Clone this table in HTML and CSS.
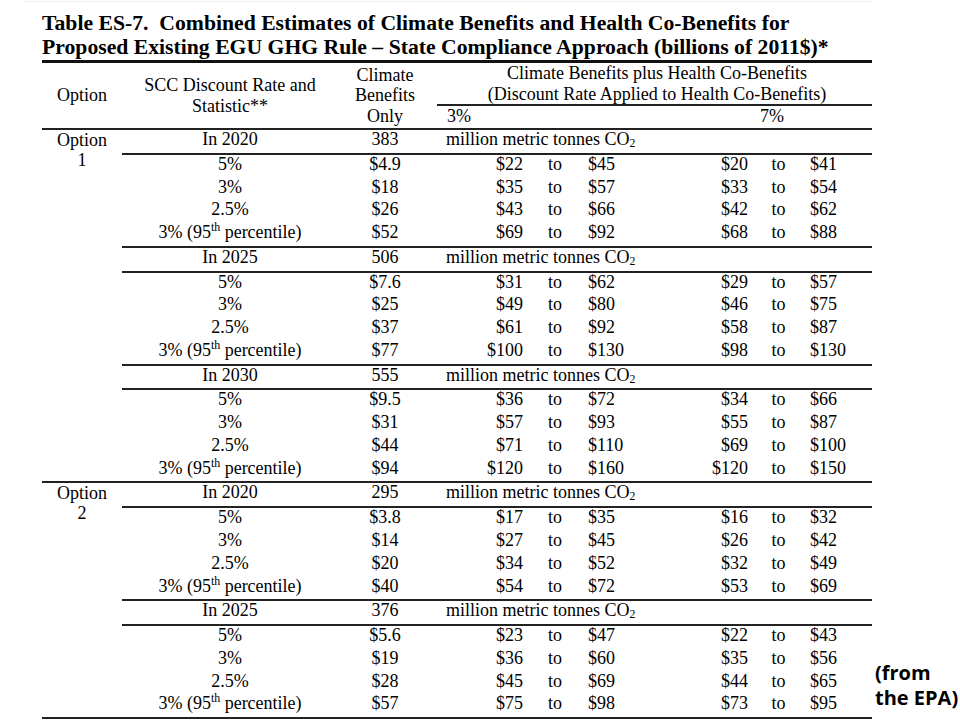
FILE: index.html
```html
<!DOCTYPE html>
<html lang="en">
<head>
<meta charset="utf-8">
<title>Table ES-7</title>
<link rel="stylesheet" href="styles.css">
</head>
<body>
<div class="page">
  <div class="doc">
    <h1 class="title">Table ES-7.&nbsp; Combined Estimates of Climate Benefits and Health Co-Benefits for<br>Proposed Existing EGU GHG Rule – State Compliance Approach (billions of 2011$)*</h1>
    <table class="est">
      <colgroup>
        <col class="c-opt"><col class="c-scc"><col class="c-clim">
        <col class="c-lo1"><col class="c-to1"><col class="c-hi1">
        <col class="c-lo2"><col class="c-to2"><col class="c-hi2">
      </colgroup>
      <thead>
        <tr class="h1">
          <th rowspan="2">Option</th>
          <th rowspan="2">SCC Discount Rate and<br>Statistic**</th>
          <th rowspan="2">Climate<br>Benefits<br>Only</th>
          <th colspan="6" class="group">Climate Benefits plus Health Co-Benefits<br>(Discount Rate Applied to Health Co-Benefits)</th>
        </tr>
        <tr class="h2">
          <th colspan="3" class="r3">3%</th>
          <th colspan="3" class="r7">7%</th>
        </tr>
      </thead>
      <tbody>
        <tr class="yr"><th rowspan="15" class="opt">Option<br>1</th><td>In 2020</td><td>383</td><td colspan="6" class="unit">million metric tonnes CO<sub>2</sub></td></tr>
        <tr><td>5%</td><td>$4.9</td><td class="lo">$22</td><td>to</td><td class="hi">$45</td><td class="lo">$20</td><td>to</td><td class="hi">$41</td></tr>
        <tr><td>3%</td><td>$18</td><td class="lo">$35</td><td>to</td><td class="hi">$57</td><td class="lo">$33</td><td>to</td><td class="hi">$54</td></tr>
        <tr><td>2.5%</td><td>$26</td><td class="lo">$43</td><td>to</td><td class="hi">$66</td><td class="lo">$42</td><td>to</td><td class="hi">$62</td></tr>
        <tr class="last"><td>3% (95<sup>th</sup> percentile)</td><td>$52</td><td class="lo">$69</td><td>to</td><td class="hi">$92</td><td class="lo">$68</td><td>to</td><td class="hi">$88</td></tr>
        <tr class="yr"><td>In 2025</td><td>506</td><td colspan="6" class="unit">million metric tonnes CO<sub>2</sub></td></tr>
        <tr><td>5%</td><td>$7.6</td><td class="lo">$31</td><td>to</td><td class="hi">$62</td><td class="lo">$29</td><td>to</td><td class="hi">$57</td></tr>
        <tr><td>3%</td><td>$25</td><td class="lo">$49</td><td>to</td><td class="hi">$80</td><td class="lo">$46</td><td>to</td><td class="hi">$75</td></tr>
        <tr><td>2.5%</td><td>$37</td><td class="lo">$61</td><td>to</td><td class="hi">$92</td><td class="lo">$58</td><td>to</td><td class="hi">$87</td></tr>
        <tr class="last"><td>3% (95<sup>th</sup> percentile)</td><td>$77</td><td class="lo">$100</td><td>to</td><td class="hi">$130</td><td class="lo">$98</td><td>to</td><td class="hi">$130</td></tr>
        <tr class="yr"><td>In 2030</td><td>555</td><td colspan="6" class="unit">million metric tonnes CO<sub>2</sub></td></tr>
        <tr><td>5%</td><td>$9.5</td><td class="lo">$36</td><td>to</td><td class="hi">$72</td><td class="lo">$34</td><td>to</td><td class="hi">$66</td></tr>
        <tr><td>3%</td><td>$31</td><td class="lo">$57</td><td>to</td><td class="hi">$93</td><td class="lo">$55</td><td>to</td><td class="hi">$87</td></tr>
        <tr><td>2.5%</td><td>$44</td><td class="lo">$71</td><td>to</td><td class="hi">$110</td><td class="lo">$69</td><td>to</td><td class="hi">$100</td></tr>
        <tr><td>3% (95<sup>th</sup> percentile)</td><td>$94</td><td class="lo">$120</td><td>to</td><td class="hi">$160</td><td class="lo">$120</td><td>to</td><td class="hi">$150</td></tr>
      </tbody>
      <tbody>
        <tr class="yr"><th rowspan="10" class="opt">Option<br>2</th><td>In 2020</td><td>295</td><td colspan="6" class="unit">million metric tonnes CO<sub>2</sub></td></tr>
        <tr><td>5%</td><td>$3.8</td><td class="lo">$17</td><td>to</td><td class="hi">$35</td><td class="lo">$16</td><td>to</td><td class="hi">$32</td></tr>
        <tr><td>3%</td><td>$14</td><td class="lo">$27</td><td>to</td><td class="hi">$45</td><td class="lo">$26</td><td>to</td><td class="hi">$42</td></tr>
        <tr><td>2.5%</td><td>$20</td><td class="lo">$34</td><td>to</td><td class="hi">$52</td><td class="lo">$32</td><td>to</td><td class="hi">$49</td></tr>
        <tr class="last"><td>3% (95<sup>th</sup> percentile)</td><td>$40</td><td class="lo">$54</td><td>to</td><td class="hi">$72</td><td class="lo">$53</td><td>to</td><td class="hi">$69</td></tr>
        <tr class="yr"><td>In 2025</td><td>376</td><td colspan="6" class="unit">million metric tonnes CO<sub>2</sub></td></tr>
        <tr><td>5%</td><td>$5.6</td><td class="lo">$23</td><td>to</td><td class="hi">$47</td><td class="lo">$22</td><td>to</td><td class="hi">$43</td></tr>
        <tr><td>3%</td><td>$19</td><td class="lo">$36</td><td>to</td><td class="hi">$60</td><td class="lo">$35</td><td>to</td><td class="hi">$56</td></tr>
        <tr><td>2.5%</td><td>$28</td><td class="lo">$45</td><td>to</td><td class="hi">$69</td><td class="lo">$44</td><td>to</td><td class="hi">$65</td></tr>
        <tr><td>3% (95<sup>th</sup> percentile)</td><td>$57</td><td class="lo">$75</td><td>to</td><td class="hi">$98</td><td class="lo">$73</td><td>to</td><td class="hi">$95</td></tr>
      </tbody>
    </table>
  </div>
  <p class="note">(from<br>the EPA)</p>
</div>
</body>
</html>
```

FILE: styles.css
```css
* { box-sizing: border-box; }
html, body { margin: 0; background: #fff; }
body {
  font-family: "Liberation Serif", "Times New Roman", serif;
  color: #000;
}
.page {
  display: flex;
  align-items: flex-end;
}
.doc {
  margin-top: 1px;
  margin-left: 25px;
  width: 847px;
  flex: none;
  border-top: 1px solid #efefef;
  padding-left: 17px;
}
.title {
  margin: 10px 0 1px;
  font-size: 21.7px;
  line-height: 23.5px;
  font-weight: bold;
  white-space: nowrap;
}
.est {
  width: 830px;
  table-layout: fixed;
  border-collapse: collapse;
  font-size: 18px;
  border-top: 3px solid #111;
}
.c-opt { width: 80px; }
.c-scc { width: 216px; }
.c-clim { width: 94px; }
.c-lo1 { width: 103px; }
.c-to1 { width: 40px; }
.c-hi1 { width: 85px; }
.c-lo2 { width: 100px; }
.c-to2 { width: 37px; }
.c-hi2 { width: 75px; }

.est th, .est td {
  padding: 0;
  font-weight: normal;
  text-align: center;
  vertical-align: middle;
  white-space: nowrap;
}
.est thead { border-bottom: 2px solid #222; }
.h1 th { line-height: 20.5px; }
.h1 .group {
  padding: 0 0 2px 10px;
  background: linear-gradient(#222, #222) 5px 100% / calc(100% - 5px) 2px no-repeat;
}
.h2 th { line-height: 20px; padding-bottom: 2px; text-align: left; }
.h2 .r3 { padding-left: 15px; }
.h2 .r7 { padding-left: 100px; }

.est tbody { border-bottom: 2px solid #222; }
.est tbody td { line-height: 19.76px; padding-bottom: 3px; }
.est tbody .opt {
  vertical-align: top;
  line-height: 20px;
  padding-top: 0;
}
.yr td, .last td { border-bottom: 2px solid #222; }
.est .unit { text-align: left; padding-left: 14px; }
.est .lo { text-align: right; padding-right: 12px; }
.est .hi { text-align: left; padding-left: 13px; }

sup {
  font-size: 0.66em;
  line-height: 0;
  vertical-align: 0.6em;
}
sub {
  font-size: 0.65em;
  line-height: 0;
  vertical-align: -0.2em;
}

.note {
  margin: 0 0 9px 3px;
  font-family: "Open Sans", "Liberation Sans", sans-serif;
  font-weight: bold;
  font-size: 20px;
  line-height: 25px;
  color: #000;
  white-space: nowrap;
}
```
